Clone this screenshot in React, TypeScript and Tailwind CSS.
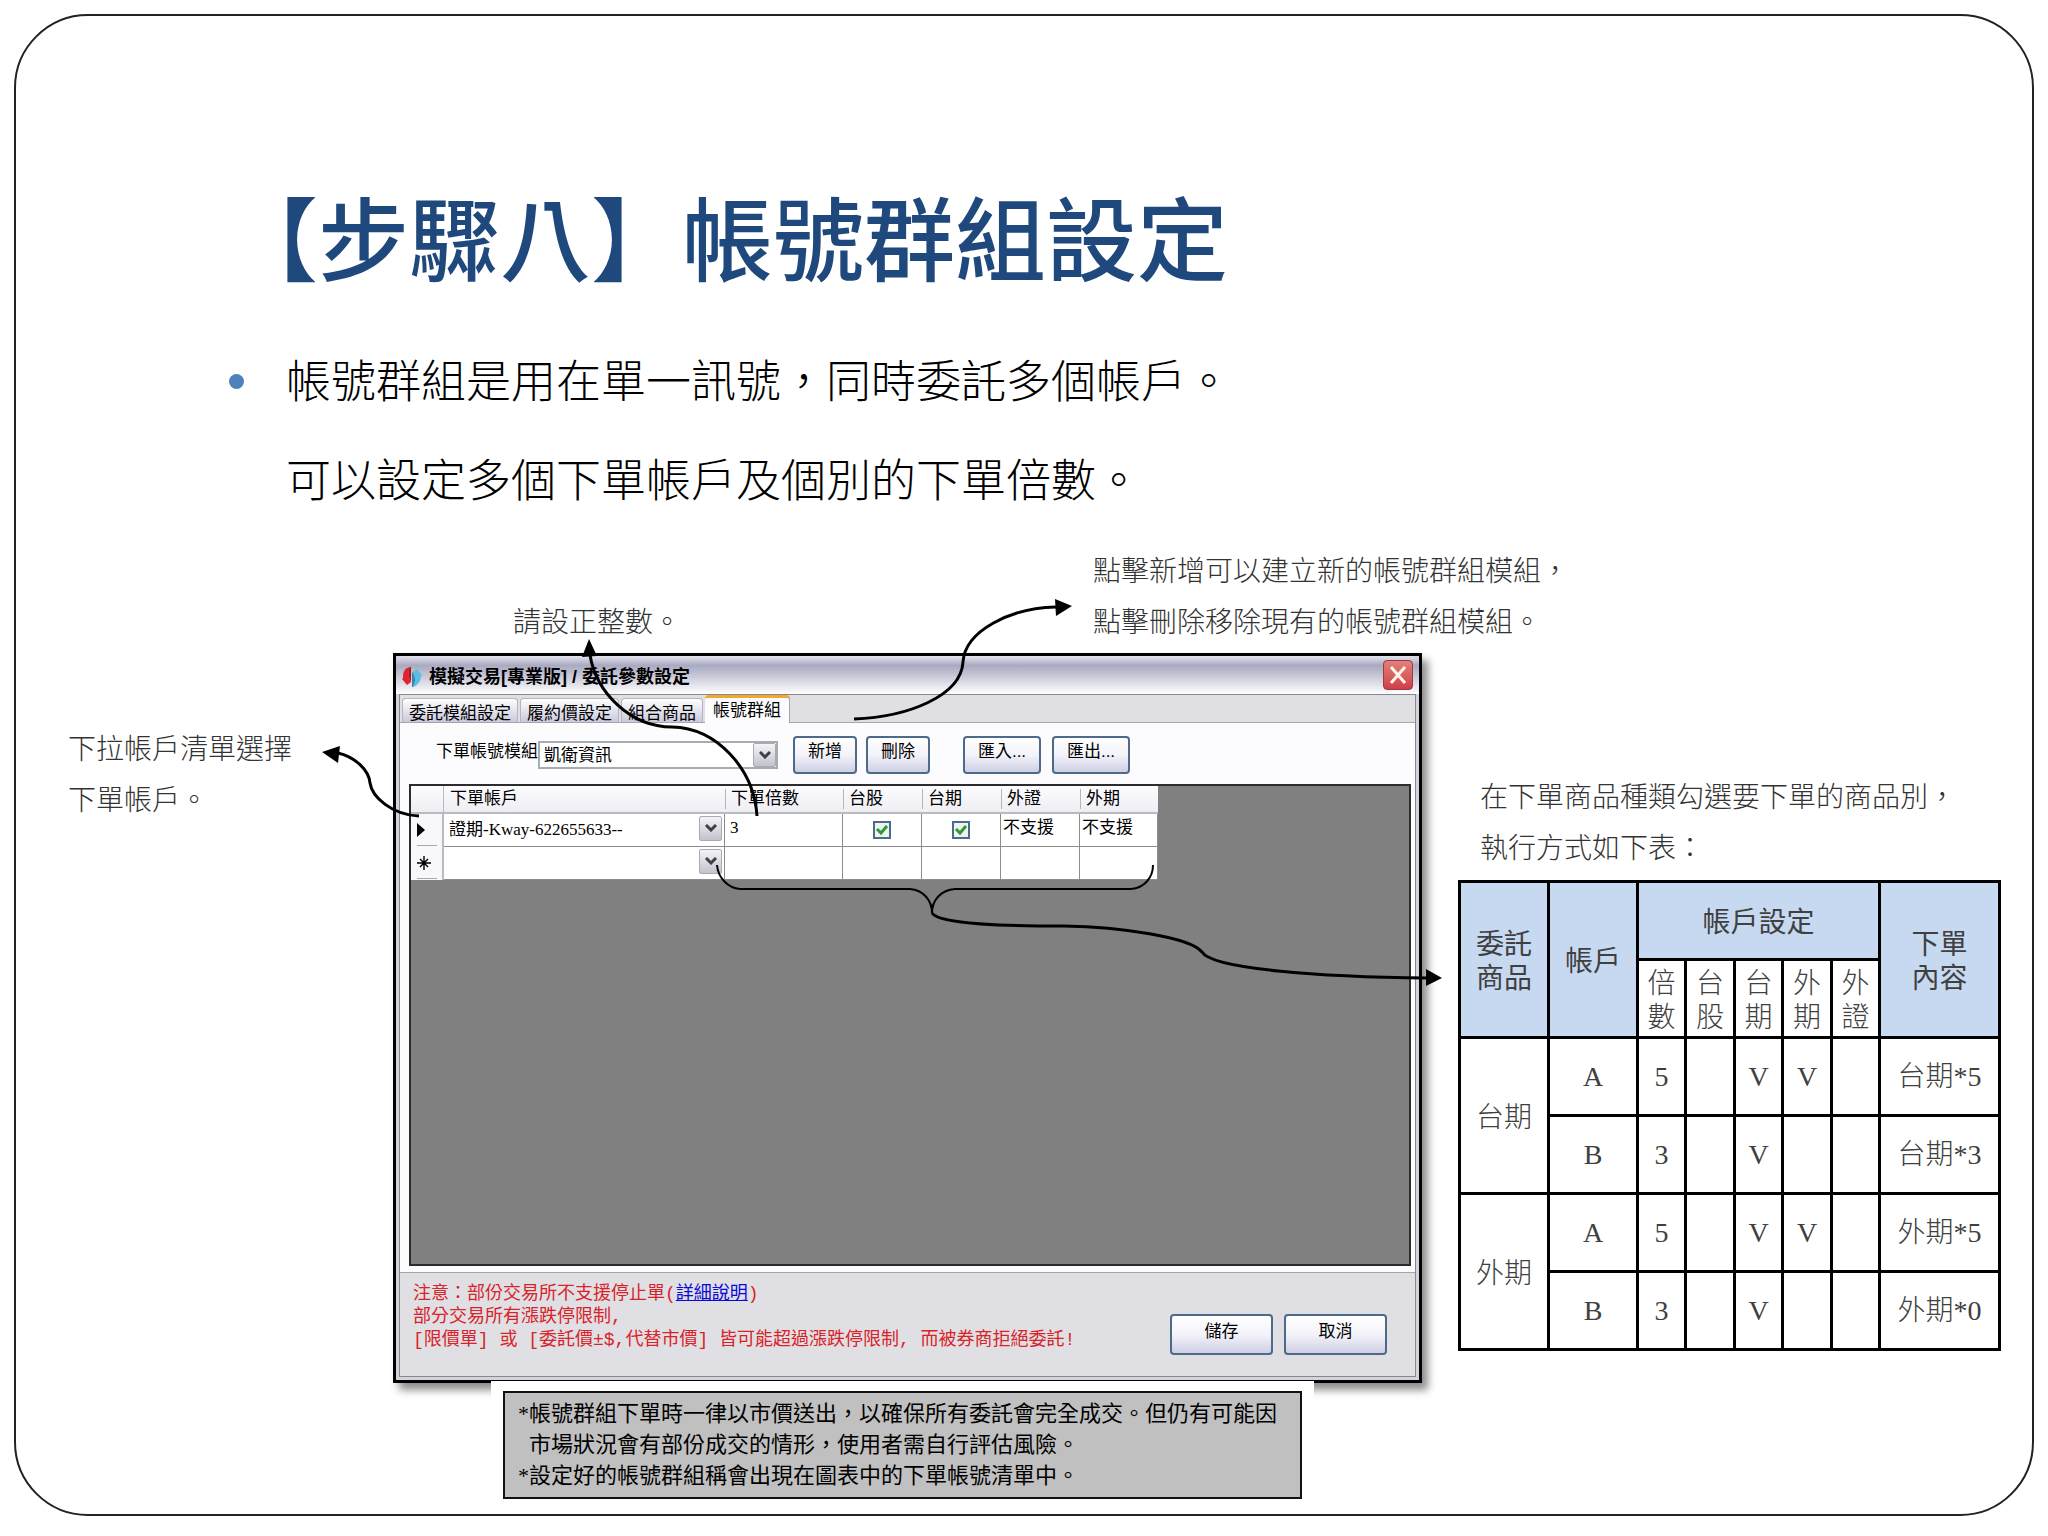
import { useState } from 'react';
import clsx from 'clsx';

const SANS = "font-['Liberation_Sans','Noto_Sans_CJK_TC',sans-serif]";
const SERIF = "font-['Liberation_Serif','Noto_Sans_CJK_TC',serif]";
const MONO = "font-['Liberation_Mono','Noto_Sans_CJK_TC',monospace]";

const TABS = ['委託模組設定', '履約價設定', '組合商品', '帳號群組'];

const RULES = [
    { product: '台期', account: 'A', cells: ['5', '', 'V', 'V', ''], result: '台期*5', span: true },
    { product: '台期', account: 'B', cells: ['3', '', 'V', '', ''], result: '台期*3', span: false },
    { product: '外期', account: 'A', cells: ['5', '', 'V', 'V', ''], result: '外期*5', span: true },
    { product: '外期', account: 'B', cells: ['3', '', 'V', '', ''], result: '外期*0', span: false },
];

const SUB_HEADS = [
    ['倍', '數'],
    ['台', '股'],
    ['台', '期'],
    ['外', '期'],
    ['外', '證'],
];

function DropArrow({ className }: { className: string }) {
    return (
        <span
            className={clsx(
                'pointer-events-none absolute flex items-center justify-center rounded-xs border border-[#a9a9b5] bg-linear-to-b from-[#f4f4f7] to-[#c3c3cd]',
                className
            )}
        >
            <svg viewBox="0 0 12 8" className="w-3 h-2">
                <path d="M1 1 L6 6 L11 1" fill="none" stroke="#3f3f48" strokeWidth="3" />
            </svg>
        </span>
    );
}

function XpButton({ label, className }: { label: string; className: string }) {
    return (
        <button
            type="button"
            className={clsx(
                'rounded-sm border-2 border-[#4d6a8a] bg-linear-to-b from-white via-[#f3f3fa] to-[#cfcfe6] pb-[6px] text-[17px] leading-5 text-black',
                className
            )}
        >
            {label}
        </button>
    );
}

function GridCheck({ label }: { label: string }) {
    const [checked, setChecked] = useState(true);
    return (
        <label className="relative mx-auto block size-[18px]">
            <input
                type="checkbox"
                aria-label={label}
                checked={checked}
                onChange={(e) => setChecked(e.target.checked)}
                className="block size-[18px] appearance-none border-2 border-[#4a6b8c] bg-[#eef2f0]"
            />
            {checked && (
                <svg viewBox="0 0 18 18" className="pointer-events-none absolute inset-0">
                    <path d="M4 8 L8 12 L14 5" fill="none" stroke="#2f9a33" strokeWidth="3" />
                </svg>
            )}
        </label>
    );
}

function Logo() {
    return (
        <svg viewBox="0 0 20 20" className="size-5">
            <path d="M8 0 C3 1 1 4 1 11 L0 12 L5 18 L9 15 L8 13 C6 8 6 4 8 0Z" fill="#e3222c" />
            <path d="M8 0 C6 4 6 8 8 13 L9 15 L9 0Z" fill="#a01822" />
            <path d="M11 20 C16 18 19 14 19 9 L20 8 L15 2 L11 5 L12 8 C14 12 13 16 11 20Z" fill="#5cbde4" />
            <path d="M11 20 C13 16 14 12 12 8 L11 5 L10 6 L10 20Z" fill="#3a86ad" />
        </svg>
    );
}

function AccountGrid() {
    const head = 'border-b-2 border-[#b9b9c0] p-0 text-left font-normal';
    const mark = 'inline-block border-l border-[#b5b5bd] pl-[5px] leading-5';
    const cell = 'border-r border-b border-[#8c8c8c] bg-white p-0';
    return (
        <table className="w-[747px] table-fixed border-separate border-spacing-0 text-[17px] text-black">
            <colgroup>
                <col className="w-[33px]" />
                <col className="w-[281px]" />
                <col className="w-[118px]" />
                <col className="w-[79px]" />
                <col className="w-[79px]" />
                <col className="w-[79px]" />
                <col className="w-[78px]" />
            </colgroup>
            <thead>
                <tr className="h-[27px] bg-linear-to-b from-[#fcfcff] to-[#ececf2]">
                    <th className="border-r border-b-2 border-[#b9b9c0] p-0" />
                    <th className={head}><span className="pl-[6px]">下單帳戶</span></th>
                    <th className={head}><span className={mark}>下單倍數</span></th>
                    <th className={head}><span className={mark}>台股</span></th>
                    <th className={head}><span className={mark}>台期</span></th>
                    <th className={head}><span className={mark}>外證</span></th>
                    <th className={head}><span className={mark}>外期</span></th>
                </tr>
            </thead>
            <tbody>
                <tr className="h-[33px]">
                    <td className="border-r-2 border-[#b9b9c0] bg-[#f8f8fb] p-0">
                        <div className="mx-auto flex h-8 w-5 items-center border-b border-[#a9a9b0]">
                            <svg viewBox="0 0 8 14" className="h-[14px] w-2">
                                <path d="M0 0 L8 7 L0 14Z" fill="#000" />
                            </svg>
                        </div>
                    </td>
                    <td className={cell}>
                        <div className="relative">
                            <select
                                aria-label="下單帳戶"
                                className={clsx('block h-8 w-full appearance-none bg-transparent pl-[5px] text-[17px]', SERIF)}
                            >
                                <option>證期-Kway-622655633--</option>
                            </select>
                            <DropArrow className="top-[2px] right-[2px] h-[25px] w-[23px]" />
                        </div>
                    </td>
                    <td className={clsx(cell, 'align-top', SERIF)}>
                        <input
                            aria-label="下單倍數"
                            defaultValue="3"
                            className="block h-7 w-full bg-transparent pl-[5px] text-[17px]"
                        />
                    </td>
                    <td className={cell}><GridCheck label="台股" /></td>
                    <td className={cell}><GridCheck label="台期" /></td>
                    <td className={clsx(cell, 'pb-1 pl-[2px]')}>不支援</td>
                    <td className={clsx(cell, 'pb-1 pl-[2px]')}>不支援</td>
                </tr>
                <tr className="h-[33px]">
                    <td className="border-r-2 border-[#b9b9c0] bg-[#f8f8fb] p-0">
                        <div className="mx-auto flex h-8 w-5 items-center border-b border-[#a9a9b0]">
                            <svg viewBox="0 0 14 14" className="size-[14px]">
                                <path d="M7 0V14M0 7H14M3 3L11 11M11 3L3 11" stroke="#000" strokeWidth="1.4" />
                            </svg>
                        </div>
                    </td>
                    <td className={cell}>
                        <div className="relative">
                            <select aria-label="新的下單帳戶" className="block h-8 w-full appearance-none bg-transparent" />
                            <DropArrow className="top-[2px] right-[2px] h-[25px] w-[23px]" />
                        </div>
                    </td>
                    <td className={cell} />
                    <td className={cell} />
                    <td className={cell} />
                    <td className={cell} />
                    <td className={cell} />
                </tr>
            </tbody>
        </table>
    );
}

function SettingsWindow() {
    const [active, setActive] = useState(3);
    return (
        <section
            className={clsx(
                'border-[3px] border-black bg-[#d3d3dc] shadow-[6px_7px_8px_rgba(0,0,0,0.45)]',
                SANS
            )}
        >
            {/* Barra de título */}
            <header className="flex h-[38px] items-center justify-between rounded-t-lg bg-linear-to-b from-[#e4e4ee] via-[#a9a9c1] via-25% to-white pr-[6px] pl-[6px]">
                <div className="flex items-center gap-[7px] pt-1">
                    <Logo />
                    <h2 className="text-[18px] leading-6 font-bold text-black">模擬交易[專業版] / 委託參數設定</h2>
                </div>
                <button
                    type="button"
                    aria-label="關閉"
                    className="flex h-[30px] w-[30px] items-center justify-center rounded-sm border border-[#9c3a44] bg-linear-to-b from-[#e08078] to-[#d03c4a]"
                >
                    <svg viewBox="0 0 18 18" className="size-[18px]">
                        <path d="M2 1 L16 17 M16 1 L2 17" stroke="#fff6e8" strokeWidth="3" />
                    </svg>
                </button>
            </header>

            <div className="mx-[3px] mb-[3px] border border-[#87878f] bg-[#fcfcfe]">
                {/* Pestañas */}
                <div className="flex h-7 items-end gap-[2px] border-b border-[#a5a5ab] bg-[#e0dfe3] pl-[2px]" role="tablist">
                    {TABS.map((tab, i) => (
                        <button
                            key={tab}
                            type="button"
                            role="tab"
                            aria-selected={i === active}
                            onClick={() => setActive(i)}
                            className={clsx(
                                'rounded-t-sm text-[17px] leading-5 text-black',
                                i === active
                                    ? '-mb-px h-7 border-t-[3px] border-r border-[#a5a5ab] border-t-[#f0a830] bg-[#fcfcfe] px-2'
                                    : 'h-6 border border-b-0 border-[#b5b5c0] bg-linear-to-b from-white to-[#c9c9dc] px-[6px] pt-[5px]'
                            )}
                        >
                            {tab}
                        </button>
                    ))}
                </div>

                <div className="pt-[13px] pr-1 pb-[6px] pl-[9px]">
                    <div className="flex h-[38px] items-center pl-[27px]">
                        <label htmlFor="module" className="pb-[6px] text-[17px] leading-5 text-black">
                            下單帳號模組
                        </label>
                        <div className="relative w-[240px]">
                            <select
                                id="module"
                                className="block h-7 w-full appearance-none border-2 border-[#a5acb2] bg-white pl-1 text-[17px] text-black"
                            >
                                <option>凱衛資訊</option>
                            </select>
                            <DropArrow className="top-[2px] right-[2px] h-6 w-[23px]" />
                        </div>
                        <XpButton label="新增" className="ml-[15px] h-[38px] w-16" />
                        <XpButton label="刪除" className="ml-[9px] h-[38px] w-16" />
                        <XpButton label="匯入..." className="ml-[33px] h-[38px] w-[78px]" />
                        <XpButton label="匯出..." className="ml-[11px] h-[38px] w-[78px]" />
                    </div>
                    <div className="mt-[10px] min-h-[482px] border-2 border-[#2c2c2c] bg-[#808080]">
                        <AccountGrid />
                    </div>
                </div>

                <footer className="flex min-h-[104px] items-start justify-between border-t border-[#a5a5ab] bg-[#e0dfe3] pt-[10px] pr-7 pl-[13px]">
                    <p className={clsx('text-[18px] leading-[23px] whitespace-nowrap text-[#d8232a]', MONO)}>
                        注意：部份交易所不支援停止單(<a href="#detail" className="text-[#0a0ad8] underline">詳細說明</a>)
                        <br />
                        部分交易所有漲跌停限制,
                        <br />
                        [限價單] 或 [委託價±$,代替市價] 皆可能超過漲跌停限制, 而被券商拒絕委託!
                    </p>
                    <div className="flex gap-[11px] pt-[31px]">
                        <XpButton label="儲存" className="h-[41px] w-[103px]" />
                        <XpButton label="取消" className="h-[41px] w-[103px]" />
                    </div>
                </footer>
            </div>
        </section>
    );
}

function RuleTable() {
    const line = 'border-[3px] border-black p-0';
    const head = 'border-[3px] border-black bg-[#c6d9f0] p-0 pt-1 font-normal';
    return (
        <table className={clsx('w-full table-fixed border-collapse text-center text-[28px] leading-[34px] font-light text-[#404040]', SERIF)}>
            <colgroup>
                <col className="w-[89px]" />
                <col className="w-[89px]" />
                <col className="w-[48px]" />
                <col className="w-[49px]" />
                <col className="w-[48px]" />
                <col className="w-[49px]" />
                <col className="w-[48px]" />
                <col />
            </colgroup>
            <thead>
                <tr className="h-[78px]">
                    <th rowSpan={2} className={head}>委託<br />商品</th>
                    <th rowSpan={2} className={head}>帳戶</th>
                    <th colSpan={5} className={head}>帳戶設定</th>
                    <th rowSpan={2} className={head}>下單<br />內容</th>
                </tr>
                <tr className="h-[78px]">
                    {SUB_HEADS.map(([a, b]) => (
                        <th key={a + b} className="border-[3px] border-black p-0 pt-1 font-light">{a}<br />{b}</th>
                    ))}
                </tr>
            </thead>
            <tbody>
                {RULES.map((rule) => (
                    <tr key={rule.product + rule.account} className="h-[78px]">
                        {rule.span && <td rowSpan={2} className="border-[3px] border-black p-0 pt-1">{rule.product}</td>}
                        <td className={line}>{rule.account}</td>
                        {rule.cells.map((value, i) => (
                            <td key={i} className={line}>{value}</td>
                        ))}
                        <td className={line}>{rule.result}</td>
                    </tr>
                ))}
            </tbody>
        </table>
    );
}

/** Flechas y llave que unen las notas con los controles de la ventana. */
function Connectors() {
    return (
        <svg
            viewBox="0 0 2048 1536"
            className="pointer-events-none absolute top-0 left-0 h-[1536px] w-[2048px]"
            fill="none"
            stroke="#000"
            strokeWidth="3"
            aria-hidden="true"
        >
            <path d="M419 816 C392 815 372 797 370 783 C369 770 355 757 338 753" />
            <path d="M322 752 L340 746 L338 763Z" fill="#000" stroke="none" />

            <path d="M757 816 C754 769 717 728 672 727 C630 727 596 692 590 655" />
            <path d="M589 639 L597 656 L582 657Z" fill="#000" stroke="none" />

            <path d="M854 719 C908 717 961 696 963 662 C965 631 1010 608 1056 607" />
            <path d="M1072 606 L1055 599 L1056 616Z" fill="#000" stroke="none" />

            <path d="M717 865 C718 878 728 888 740 889 H910 C923 890 932 900 932 913 C932 900 941 890 955 889 H1131 C1144 888 1153 878 1153 865" strokeWidth="2" />
            <path d="M932 913 C940 925 1010 926 1064 926 C1120 927 1190 937 1202 952 C1212 969 1320 977 1428 978" />
            <path d="M1442 978 L1426 969 L1426 986Z" fill="#000" stroke="none" />
        </svg>
    );
}

export default function App() {
    const note = clsx('text-[28px] leading-[51px] font-light whitespace-nowrap text-[#333333]', SERIF);
    return (
        <div lang="zh-Hant-TW" className="relative min-h-screen bg-white px-[14px] pt-[14px] pb-5">
            <main className="rounded-[74px] border-2 border-[#222222] pt-[168px] pb-[15px]">
                <h1 className="pl-[211px] font-['Noto_Sans_CJK_TC',sans-serif] text-[91px] leading-[100px] font-medium text-[#1f497d]">
                    【步驟八】帳號群組設定
                </h1>

                <ul className={clsx('mt-12 pl-[213px] text-[45px] leading-[99px] font-light text-black', SERIF)}>
                    <li className="flex items-start gap-[42px]">
                        <span className="mt-[42px] size-[15px] rounded-full bg-[#4f81bd]" />
                        <p className="pt-[2px]">
                            帳號群組是用在單一訊號，同時委託多個帳戶。
                            <br />
                            可以設定多個下單帳戶及個別的下單倍數。
                        </p>
                    </li>
                </ul>

                <div className="mt-[14px] flex items-start">
                    <p className={clsx('w-[377px] shrink-0 pt-[178px] pl-[52px]', note)}>
                        下拉帳戶清單選擇
                        <br />
                        下單帳戶。
                    </p>

                    <div className="min-w-0 flex-1">
                        <div className="flex items-end">
                            <p className={clsx('w-[700px] shrink-0 pl-[120px]', note)}>請設正整數。</p>
                            <p className={note}>
                                點擊新增可以建立新的帳號群組模組，
                                <br />
                                點擊刪除移除現有的帳號群組模組。
                            </p>
                        </div>
                        <div className="mt-[5px]">
                            <SettingsWindow />
                        </div>
                        <div className="relative -mt-[2px] mr-[108px] ml-[98px] bg-white px-3 pt-[10px]">
                            <div className={clsx('border-2 border-[#111111] bg-[#c0c0c0] pt-[5px] pb-[6px] pl-[13px] text-[22px] leading-[31px] whitespace-nowrap text-black', SERIF)}>
                                <p>*帳號群組下單時一律以市價送出，以確保所有委託會完全成交。但仍有可能因</p>
                                <p className="pl-[11px]">市場狀況會有部份成交的情形，使用者需自行評估風險。</p>
                                <p>*設定好的帳號群組稱會出現在圖表中的下單帳號清單中。</p>
                            </div>
                        </div>
                    </div>

                    <div className="w-[610px] shrink-0 pt-[226px] pr-[31px] pl-9">
                        <p className={clsx('pl-[22px]', note)}>
                            在下單商品種類勾選要下單的商品別，
                            <br />
                            執行方式如下表：
                        </p>
                        <div className="mt-[6px]">
                            <RuleTable />
                        </div>
                    </div>
                </div>
            </main>
            <Connectors />
        </div>
    );
}
